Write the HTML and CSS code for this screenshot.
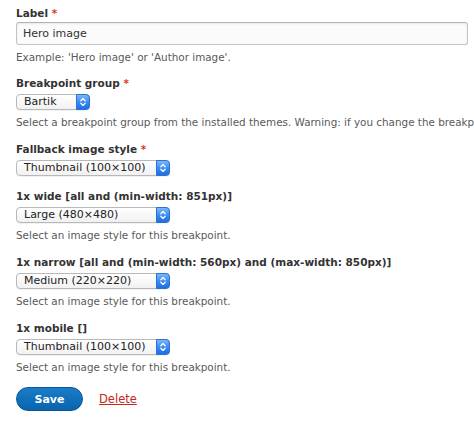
FILE: index.html
```html
<!DOCTYPE html>
<html>
<head>
<meta charset="utf-8">
<link rel="stylesheet" href="styles.css">
</head>
<body>
<form class="form">
  <div class="form-item first">
    <label class="label">Label <span class="req">*</span></label>
    <div class="text-input">Hero image</div>
    <div class="desc">Example: 'Hero image' or 'Author image'.</div>
  </div>
  <div class="form-item">
    <label class="label">Breakpoint group <span class="req">*</span></label>
    <div class="select small"><span class="select-text">Bartik</span><span class="arrow"><svg viewBox="0 0 14 16" width="14" height="16"><path d="M4.5 6.5 L7 4 L9.5 6.5 M4.5 9.5 L7 12 L9.5 9.5" fill="none" stroke="#fff" stroke-width="1.5" stroke-linecap="round" stroke-linejoin="round"/></svg></span></div>
    <div class="desc">Select a breakpoint group from the installed themes. Warning: if you change the breakpoint group you lose all your selected mappings.</div>
  </div>
  <div class="form-item">
    <label class="label">Fallback image style <span class="req">*</span></label>
    <div class="select"><span class="select-text">Thumbnail (100×100)</span><span class="arrow"><svg viewBox="0 0 14 16" width="14" height="16"><path d="M4.5 6.5 L7 4 L9.5 6.5 M4.5 9.5 L7 12 L9.5 9.5" fill="none" stroke="#fff" stroke-width="1.5" stroke-linecap="round" stroke-linejoin="round"/></svg></span></div>
  </div>
  <div class="form-item">
    <label class="label">1x wide [all and (min-width: 851px)]</label>
    <div class="select"><span class="select-text">Large (480×480)</span><span class="arrow"><svg viewBox="0 0 14 16" width="14" height="16"><path d="M4.5 6.5 L7 4 L9.5 6.5 M4.5 9.5 L7 12 L9.5 9.5" fill="none" stroke="#fff" stroke-width="1.5" stroke-linecap="round" stroke-linejoin="round"/></svg></span></div>
    <div class="desc">Select an image style for this breakpoint.</div>
  </div>
  <div class="form-item">
    <label class="label">1x narrow [all and (min-width: 560px) and (max-width: 850px)]</label>
    <div class="select"><span class="select-text">Medium (220×220)</span><span class="arrow"><svg viewBox="0 0 14 16" width="14" height="16"><path d="M4.5 6.5 L7 4 L9.5 6.5 M4.5 9.5 L7 12 L9.5 9.5" fill="none" stroke="#fff" stroke-width="1.5" stroke-linecap="round" stroke-linejoin="round"/></svg></span></div>
    <div class="desc">Select an image style for this breakpoint.</div>
  </div>
  <div class="form-item">
    <label class="label">1x mobile []</label>
    <div class="select"><span class="select-text">Thumbnail (100×100)</span><span class="arrow"><svg viewBox="0 0 14 16" width="14" height="16"><path d="M4.5 6.5 L7 4 L9.5 6.5 M4.5 9.5 L7 12 L9.5 9.5" fill="none" stroke="#fff" stroke-width="1.5" stroke-linecap="round" stroke-linejoin="round"/></svg></span></div>
    <div class="desc">Select an image style for this breakpoint.</div>
  </div>
  <div class="actions">
    <span class="btn-save">Save</span>
    <a class="delete" href="#">Delete</a>
  </div>
</form>
</body>
</html>
```
FILE: styles.css
```css
html, body {
  margin: 0;
  padding: 0;
  background: #fff;
  overflow: hidden;
}
body {
  font-family: "DejaVu Sans", Verdana, sans-serif;
  color: #333;
  width: 474px;
  height: 424px;
}
.form {
  padding: 6px 0 0 16px;
}
.form-item {
  margin-bottom: 13px;
}
.form-item.first {
  margin-bottom: 12px;
}
.label {
  display: block;
  font-weight: bold;
  font-size: 10.5px;
  line-height: 14px;
  height: 14px;
  color: #333;
  white-space: nowrap;
  margin-bottom: 4px;
}
.first .label {
  margin-bottom: 2px;
}
.req {
  color: #e0391f;
}
.text-input {
  box-sizing: border-box;
  width: 452px;
  height: 23px;
  border: 1px solid #c4c4c4;
  border-top-color: #b4b4b4;
  border-radius: 3px;
  background: #fbfbfb;
  box-shadow: inset 0 1px 2px rgba(0,0,0,0.08);
  font-size: 11px;
  line-height: 21px;
  padding-left: 6px;
  color: #333;
}
.desc {
  font-size: 10.4px;
  line-height: 14px;
  color: #595959;
  margin-top: 5px;
  white-space: nowrap;
}
.select {
  box-sizing: border-box;
  display: flex;
  align-items: stretch;
  width: 154px;
  height: 16px;
  border: 1px solid #b8b8b8;
  border-radius: 4px;
  background: linear-gradient(#ffffff, #f1f1f1);
  box-shadow: 0 1px 0 rgba(0,0,0,0.05);
}
.select.small {
  width: 74px;
}
.select-text {
  flex: 1;
  font-size: 11px;
  line-height: 14px;
  padding-left: 7px;
  color: #222;
  white-space: nowrap;
  overflow: hidden;
}
.arrow {
  width: 14px;
  margin: -1px -1px -1px 0;
  border-radius: 0 4px 4px 0;
  background: linear-gradient(#7ab8fb, #3b8cf5 50%, #1c6ee6);
  border: 1px solid #2f6fcf;
  box-sizing: border-box;
  display: flex;
  align-items: center;
  justify-content: center;
}
.arrow svg {
  display: block;
  width: 12px;
  height: 14px;
}
.actions {
  display: flex;
  align-items: center;
  gap: 16px;
  height: 24px;
}
.btn-save {
  display: flex;
  align-items: center;
  justify-content: center;
  box-sizing: border-box;
  width: 67px;
  height: 24px;
  border-radius: 12px;
  background: linear-gradient(#1a7cc8, #0a64ad);
  border: 1px solid #0a5597;
  color: #fff;
  font-weight: bold;
  font-size: 11px;
}
.delete {
  color: #c4281b;
  font-size: 11.5px;
  text-decoration: underline;
}
```
